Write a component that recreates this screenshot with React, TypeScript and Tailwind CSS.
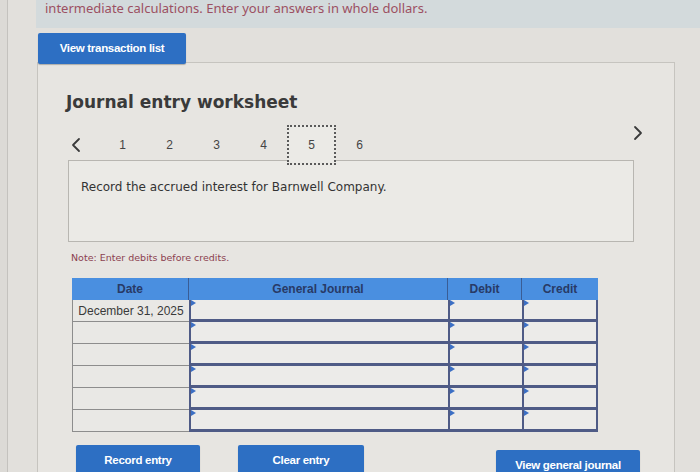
import React from 'react';

const tabs = ['1', '2', '3', '4', '5', '6'];
const rows = ['December 31, 2025', '', '', '', '', ''];

const btn =
  "bg-[#2d6fc3] text-white font-bold text-[11.5px] tracking-[-0.3px] font-['Liberation_Sans',Arial,sans-serif] rounded-[2px] shadow-[0_1px_1px_rgba(0,0,0,0.25)] flex items-center justify-center";

const Marker: React.FC = () => (
  <span className="absolute left-0 top-0 w-0 h-0 border-y-[3px] border-y-transparent border-l-[5px] border-l-[#3c6fc4]" />
);

const Chevron: React.FC<{ dir: 'left' | 'right' }> = ({ dir }) => (
  <svg width="10" height="16" viewBox="0 0 10 16" fill="none">
    <polyline
      points={dir === 'left' ? '8,2 2,8 8,14' : '2,2 8,8 2,14'}
      stroke="#3a3a3a"
      strokeWidth="1.8"
      strokeLinecap="round"
      strokeLinejoin="round"
    />
  </svg>
);

export default function App() {
  return (
    <div className="w-[700px] h-[472px] overflow-hidden bg-[#e2e0dc] font-['Liberation_Sans',Arial,sans-serif] flex">
      <div className="w-[8px] shrink-0 border-r border-[#c4c2be] bg-[#dcdad6]" />
      <div className="flex-1">
        <div className="ml-[28px] h-[28px] bg-[#d3dadc] overflow-hidden">
          <p className="pl-[9px] text-[13px] leading-[16px] text-[#9c5062] font-['Noto_Sans',sans-serif] whitespace-nowrap">
            intermediate calculations. Enter your answers in whole dollars.
          </p>
        </div>

        <div className="ml-[30px] mt-[5px] relative z-10">
          <button className={`${btn} w-[148px] h-[31px]`}>View transaction list</button>
        </div>

        <div className="ml-[29px] -mt-[2px] w-[638px] h-[420px] border border-[#c6c4bf] bg-[#e7e5e1]">
          <h1 className="pt-[28px] pl-[28px] text-[17px] leading-[22px] font-bold text-[#3a3a3a] font-['DejaVu_Sans',Verdana,sans-serif]">
            Journal entry worksheet
          </h1>

          <div className="mt-[12px] -mb-[5px] relative z-10 flex h-[40px]">
            <div className="ml-[28px] w-[20px] flex items-center justify-center">
              <Chevron dir="left" />
            </div>
            <div className="ml-[13px] flex">
              {tabs.map((t) => (
                <div
                  key={t}
                  className={`w-[47px] h-[40px] flex items-center justify-center text-[12px] text-[#444] ${
                    t === '5' ? 'w-[49px] border-2 border-dotted border-[#5a5a5a] bg-[#ebeae6]' : ''
                  }`}
                >
                  {t}
                </div>
              ))}
            </div>
            <div className="flex-1" />
            <div className="mr-[31px] h-[16px]">
              <Chevron dir="right" />
            </div>
          </div>

          <div className="ml-[30px] w-[566px] h-[82px] border border-[#b8b6b1] bg-[#ebeae6] pt-[18px] pl-[12px]">
            <p className="text-[12px] leading-[16px] text-[#333] font-['DejaVu_Sans',Verdana,sans-serif]">
              Record the accrued interest for Barnwell Company.
            </p>
          </div>

          <p className="mt-[10px] ml-[33px] text-[9.5px] leading-[12px] text-[#8b4150] font-['DejaVu_Sans',Verdana,sans-serif]">
            Note: Enter debits before credits.
          </p>

          <div className="mt-[14px] ml-[34px] w-[526px]">
            <div className="grid grid-cols-[117px_259px_74px_76px] h-[22px] bg-[#4a8fe0] text-[12px] font-bold text-[#283a66]">
              <div className="flex items-center justify-center border-r border-[#3a5d95]">Date</div>
              <div className="flex items-center justify-center border-r border-[#3a5d95]">General Journal</div>
              <div className="flex items-center justify-center border-r border-[#3a5d95]">Debit</div>
              <div className="flex items-center justify-center">Credit</div>
            </div>
            {rows.map((d, i) => (
              <div key={i} className="grid grid-cols-[117px_259px_74px_76px] h-[22px]">
                <div className="border-l border-b border-[#8d8d8d] bg-[#e9e8e5] text-[12px] text-[#3a3a3a] flex items-center justify-center">
                  {d}
                </div>
                <div className="relative border-l-2 border-b-[3px] border-[#4f5b86] bg-[#ecebe9]">
                  <Marker />
                </div>
                <div className="relative border-l-2 border-b-[3px] border-[#4f5b86] bg-[#ecebe9]">
                  <Marker />
                </div>
                <div className="relative border-l-2 border-r-2 border-b-[3px] border-[#4f5b86] bg-[#ecebe9]">
                  <Marker />
                </div>
              </div>
            ))}
          </div>

          <div className="mt-[13px] flex items-start">
            <button className={`${btn} ml-[38px] w-[124px] h-[32px]`}>Record entry</button>
            <button className={`${btn} ml-[38px] w-[126px] h-[32px]`}>Clear entry</button>
            <button className={`${btn} ml-[132px] mt-[5px] w-[144px] h-[32px]`}>View general journal</button>
          </div>
        </div>
      </div>
    </div>
  );
}
